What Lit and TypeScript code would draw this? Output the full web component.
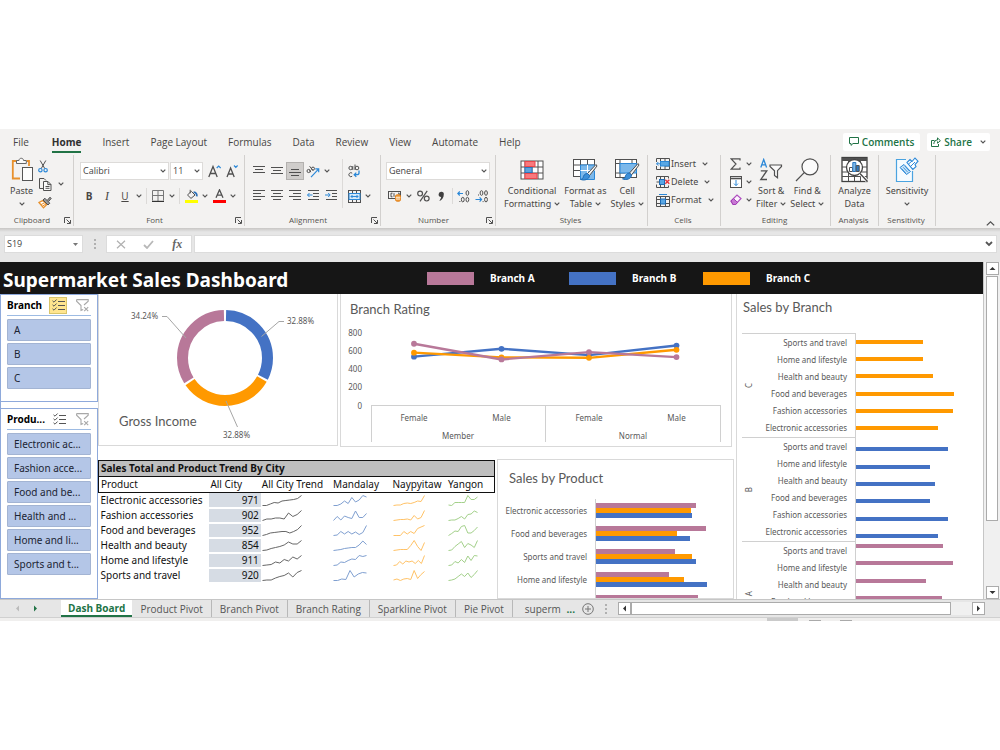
import { LitElement, html, svg, css, nothing } from "lit";
import { customElement, property, state } from "lit/decorators.js";
import { classMap } from "lit/directives/class-map.js";

const BLUE = "#4472c4";
const ORANGE = "#ff9900";
const MAUVE = "#b87899";

const base = css`
  *, *::before, *::after { box-sizing: border-box; }
  button, input, select { font: inherit; color: inherit; margin: 0; padding: 0; border: 0; background: none; border-radius: 0; }
  svg { display: block; flex: none; }
`;

const chev = html`<svg class="chev" width="6" height="4" viewBox="0 0 6 4" fill="none" stroke="#555" stroke-width="1.2"><path d="M0.7 0.7L3 3 5.3 0.7"/></svg>`;

/* stroke icons of the ribbon */
const ic = (w: number, h: number, body: unknown, vb = `0 0 ${w} ${h}`) =>
  html`<svg width=${w} height=${h} viewBox=${vb} fill="none" stroke="#505050" stroke-width="1">${body}</svg>`;

const lines = (rows: [number, number, number][]) =>
  ic(12, 12, svg`${rows.map(([x1, x2, y]) => svg`<path d="M${x1} ${y}H${x2}"/>`)}`);

const I = {
  paste: ic(22, 25, svg`
    <path d="M7 4H1.8v17.5H9M15.5 4H18v5" stroke="#e8912d" stroke-width="1.8"/>
    <path d="M5.5 6.5V3.5H8C8 0.5 12.5 0.5 12.5 3.5h2.8v3z" fill="#fafafa" stroke="#666"/>
    <rect x="11.5" y="10.5" width="10" height="13" fill="#fdfdfd" stroke="#555"/>`),
  cut: ic(10, 13, svg`
    <path d="M2.2 0.5L6.8 8.6M7.8 0.5L3.2 8.6"/>
    <circle cx="2.4" cy="10.2" r="1.7" stroke="#2b88d8" stroke-width="1.2"/><circle cx="7.6" cy="10.2" r="1.7" stroke="#2b88d8" stroke-width="1.2"/>`),
  copy: ic(14, 14, svg`
    <path d="M5 11.5H1.5v-10H6l2 2"/>
    <path d="M5.5 4.5H10l3 3v6H5.5zM9.8 4.6v3H13M7.5 9.5h4M7.5 11.3h4" fill="#fafafa"/>`),
  painter: ic(14, 13, svg`
    <path d="M1 6.5L5.5 11.8 9 8.4 4.6 4.6z" stroke="#e8912d" fill="#fff" stroke-width="1.3"/>
    <path d="M3 8.6l3.6-1.8M4.3 10.2L8 8" stroke="#e8912d"/>
    <path d="M5 4l1.8-1.8 5 5L10 9zM9.3 4.3L12 1.2l1.2 1.2-2.5 3" fill="#999"/>`),
  growA: ic(13, 14, svg`<path d="M0.8 13L5 2.5 9.2 13M2.2 9.5h5.6" stroke-width="1.3"/><path d="M8.7 4L10.7 2l2 2" stroke="#2b88d8" stroke-width="1.2"/>`),
  shrinkA: ic(13, 14, svg`<path d="M1 13L4.6 4 8.2 13M2.3 10h4.6" stroke-width="1.3"/><path d="M8 1.5l1.8 1.8 1.8-1.8" stroke="#2b88d8" stroke-width="1.2"/>`),
  borders: ic(12, 12, svg`<path d="M0.5 0.5h11v10M0.5 0.5v10M6 1v10M1 5.5h10" stroke="#777"/><path d="M0 11.5h12" stroke="#333" stroke-width="1.4"/>`),
  fill: ic(13, 14, svg`
    <path d="M2.5 6L6.3 2.3 10 6 6 9.4zM5.2 0.8v3.5"/>
    <path d="M8.6 3.2c2.6 0 3.4 1.8 3.2 4.2" stroke="#2b6fb8" stroke-width="1.8"/>
    <rect x="0" y="11" width="13" height="3" fill="#ffff00" stroke="none"/>`),
  fontColor: ic(13, 14, svg`<path d="M3 8.8L6.5 0.8 10 8.8M4.2 6.2h4.6" stroke-width="1.3"/><rect x="0" y="11" width="13" height="3" fill="#ff0000" stroke="none"/>`),
  top: lines([[0, 12, 1.5], [2, 10, 4.5], [0, 12, 7.5]]),
  mid: lines([[0, 12, 2.5], [2, 10, 5.5], [0, 12, 8.5]]),
  bot: lines([[2, 10, 4.5], [0, 12, 7.5], [2, 10, 10.5]]),
  left: lines([[0, 12, 0.5], [0, 8, 3.5], [0, 12, 6.5], [0, 8, 9.5]]),
  center: lines([[0, 12, 0.5], [2, 10, 3.5], [0, 12, 6.5], [2, 10, 9.5]]),
  right: lines([[0, 12, 0.5], [4, 12, 3.5], [0, 12, 6.5], [4, 12, 9.5]]),
  outdent: ic(12, 12, svg`<path d="M1 0.5h11M6 3.5h6M6 6.5h6M1 9.5h11"/><path d="M5.5 5H0.5M2.5 3L0.5 5l2 2" stroke="#2b88d8"/>`),
  indent: ic(12, 12, svg`<path d="M1 0.5h11M7 3.5h5M7 6.5h5M1 9.5h11"/><path d="M0 5h5M3.2 3l2 2-2 2" stroke="#2b88d8"/>`),
  orient: ic(14, 13, svg`
    <circle cx="2.6" cy="6" r="1.6"/><path d="M3.6 4.8l1.2 2.4M3.6 1.2l3.4 4.4"/><circle cx="7" cy="3.600" r="1.5"/>
    <path d="M5 12.2L12.5 4.2M9.3 3.8h3.4v3.400" stroke="#2b88d8" stroke-width="1.2"/>`),
  wrap: ic(13, 14, svg`
    <circle cx="2.6" cy="4" r="1.7"/><path d="M4.8 2v4M7 0.5V6"/><circle cx="9" cy="4" r="1.8"/>
    <path d="M4.2 9.2A2 2 0 1 0 4.2 12.2"/>
    <path d="M11 6.5v2.5c0 1.2-1 1.7-2 1.7H6.5M8.3 8.6L6.2 10.7l2.1 2.1" stroke="#2b88d8" stroke-width="1.3"/>`),
  merge: ic(13, 13, svg`<rect x="0.5" y="0.5" width="12" height="12"/><path d="M4.5 0.5v3M8.5 0.5v3M4.5 9.5v3M8.5 9.5v3"/><rect x="1" y="3.5" width="11" height="6" fill="#d5e9f9" stroke="#2b88d8"/><path d="M3 6.5h7M4.5 5L3 6.5 4.5 8M8.5 5L10 6.5 8.5 8" stroke="#2b88d8"/>`),
  money: ic(14, 12, svg`
    <rect x="0.5" y="1.5" width="12" height="7"/><path d="M4.5 3.2H3v3.6h1.5M6 3.2v3.6M10 3.2h1.2v3.6"/>
    <path d="M7.5 5.8c0-1.3 5-1.3 5 0v4.4c0 1.3-5 1.3-5 0z" fill="#f0a040" stroke="#e07b10"/><path d="M7.6 7.3h4.8M7.6 9h4.8" stroke="#fff" stroke-width=".8"/>`),
  percent: ic(13, 12, svg`<circle cx="3.1" cy="3.6" r="2.4" stroke-width="1.2"/><circle cx="9.7" cy="8.6" r="2.4" stroke-width="1.2"/><path d="M10.2 0.8L3 11.4" stroke-width="1.2"/>`),
  comma: ic(7, 11, svg`<path d="M3.3 0.8a2.5 2.5 0 0 1 2.5 2.8C5.8 6.8 4 9.2 1.6 10 1.2 9.4 2.9 8 3.1 6A2.6 2.6 0 1 1 3.3 0.8z" fill="#404040" stroke="none"/>`),
  incDec: ic(14, 13, svg`
    <path d="M6 3.5H0.8M2.8 1.5l-2 2 2 2" stroke="#2b88d8" stroke-width="1.2"/>
    <ellipse cx="10.4" cy="3" rx="1.4" ry="2.3"/><ellipse cx="5.8" cy="9.6" rx="1.4" ry="2.3"/><ellipse cx="10.4" cy="9.6" rx="1.4" ry="2.3"/><path d="M2.4 11.5h1"/>`),
  decDec: ic(14, 13, svg`
    <path d="M0.5 9.5h6M4.6 7.4l2 2.1-2 2.1" stroke="#2b88d8" stroke-width="1.2"/>
    <ellipse cx="6.5" cy="3" rx="1.4" ry="2.3"/><ellipse cx="11" cy="3" rx="1.4" ry="2.3"/><ellipse cx="11" cy="9.6" rx="1.4" ry="2.3"/><path d="M3 5h1M7.6 11.6h1"/>`),
  cond: ic(24, 20, svg`
    <rect x="1" y="1" width="22" height="18" fill="#fff"/>
    <path d="M5 1v18M12 1v18M18 1v18M1 7h22M1 13h22"/>
    <rect x="5" y="1.5" width="10" height="5" fill="#f8797d" stroke="#e8474c"/>
    <rect x="5" y="7.5" width="7" height="5" fill="#5ea3dc" stroke="#2b78c0"/>
    <rect x="5" y="13.5" width="12" height="5" fill="#f8797d" stroke="#e8474c"/>`),
  table: ic(26, 23, svg`
    <rect x="1.5" y="1.5" width="21" height="17" fill="#fff"/>
    <path d="M8.5 1.5v17M15.5 1.5v17M1.5 7h21M1.5 12.5h21"/>
    <path d="M8.5 7h14v14.5h-14z" fill="#7cb8ea" stroke="#2b88d8"/>
    <path d="M15.5 7v12M8.5 12.5h14" stroke="#fff"/>
    <path d="M24 6.5L15.5 15.5l2 2L25 8z" fill="#f3f2f1"/>
    <path d="M15.5 15.5c-3 0-4 2-4.5 4.5-.5 1-2 1.3-2.5 1.3 3.5 1.7 9 .2 9-3.8z" fill="#3c8fd8" stroke="#1f6cb5"/>`),
  cell: ic(26, 23, svg`
    <rect x="1.5" y="1.5" width="21" height="18" fill="#fff"/>
    <path d="M6 1.5v18M1.5 5.5h21M18 1.5v4M1.5 15h10"/>
    <rect x="6" y="5.5" width="16.5" height="9.5" fill="#7cb8ea" stroke="#2b88d8"/>
    <path d="M24 5.5L15.5 15l2 2L25 7z" fill="#f3f2f1"/>
    <path d="M15.5 15c-3 0-4 2-4.5 4.5-.5 1-2 1.3-2.5 1.3 3.5 1.7 9 .2 9-3.8z" fill="#3c8fd8" stroke="#1f6cb5"/>`),
  insert: ic(14, 12, svg`<path d="M0.5 4V0.5h13v11H0.5V8M4.5 0.5v3M9 0.5v11M4.5 8.5v3M9 3.8h4.5M9 8h4.5"/><rect x="4.5" y="3.5" width="8.5" height="4.5" fill="#5aa7e4" stroke="#2b88d8"/><path d="M4.5 5.8H0.6M2.3 4L0.6 5.8l1.7 1.8" stroke="#2b88d8"/>`),
  del: ic(14, 12, svg`<path d="M0.5 3.5V0.5h12v2M4.5 0.5v3M8.5 0.5v3M0.5 8.5v3h12v-2M4.5 8.5v3M8.5 8.5v3"/><path d="M0.5 6h3" /><rect x="3.5" y="3.5" width="5" height="5" fill="#5aa7e4" stroke="#1f6cb5"/><path d="M9.3 3.8l4 4M13.3 3.8l-4 4" stroke="#e8343a" stroke-width="1.4"/>`),
  format: ic(14, 13, svg`<path d="M0.5 2.5h13v10H0.5zM4.5 2.5v10M9.5 2.5v10M0.5 5.5h13M0.5 9.5h13"/><rect x="4.5" y="5" width="5" height="5" fill="#5aa7e4" stroke="#1f6cb5"/><path d="M3 0.5h8" stroke="#2b88d8"/>`),
  sigma: ic(11, 12, svg`<path d="M10 2.5V0.8H1.2L6 6 1.2 11.2H10V9.5" stroke-width="1.2"/>`),
  fillDown: ic(12, 12, svg`<rect x="0.5" y="0.5" width="11" height="11" fill="#fff"/><path d="M0.5 2.5h11" stroke-width="1.6"/><path d="M6 4v5.5M4 7.6l2 2 2-2" stroke="#2b88d8"/>`),
  eraser: ic(12, 12, svg`<path d="M1 7L7 1l4 3.5L5.5 10.5H3z" stroke="#b04fc0" fill="#fdf4fe" stroke-width="1.2"/><path d="M1 7l2.4-2.4 4.2 3.8-2.1 2.1H3z" fill="#c878d4" stroke="#a03cb4"/>`),
  sort: ic(24, 24, svg`
    <path d="M1.8 9.5L4.7 1.5 7.6 9.5M2.8 6.8h3.8" stroke="#2b88d8" stroke-width="1.3"/>
    <path d="M1.8 12.8h6L1.8 21.5h6.2" stroke-width="1.3"/>
    <path d="M11 7h11.5v1.5l-4 4.2v7l-3-2.2v-4.8l-4.5-4.2z" fill="#fafafa" stroke-width="1.2"/>`),
  find: ic(24, 24, svg`<circle cx="15" cy="8.8" r="8" fill="#fbfbfb" stroke-width="1.2"/><path d="M9.2 14.6L1 23" stroke-width="1.2"/>`),
  analyze: ic(27, 27, svg`
    <rect x="1" y="1.5" width="25" height="24" fill="#fff" stroke="#404040" stroke-width="1.3"/>
    <path d="M1 3.5h25" stroke="#505050" stroke-width="3"/><path d="M1 11h25M1 16h25M1 20.5h25M7.5 4v21M19.5 4v21M13.5 18v7"/>
    <circle cx="13.500" cy="11.500" r="8" fill="#fff" stroke="#444" stroke-width="1.3"/>
    <path d="M19 17.5l7 7.5" stroke="#fff" stroke-width="3"/><path d="M19 17.5l7 7.5" stroke="#444" stroke-width="1.3"/>
    <path d="M8.5 15.5v-4h3v4z" fill="#fff"/><path d="M11.8 15.5V6.5h3v9z" fill="#7cb8ea" stroke="#2b78c0"/><path d="M15.2 15.5V9.5h3v6z" fill="#2b78c0"/>`),
  sens: ic(24, 25, svg`
    <path d="M11 2.5H1.5v22h16V14" stroke="#4aa3e0" fill="#f6fbff" stroke-width="1.2"/>
    <path d="M5 10.5l4-3 6.5 7-4 3z" fill="#cfe7f8" stroke="#2b88d8"/>
    <path d="M6.5 11.5l4.5 5M8.2 10.3l4.6 5M9.8 9l4.5 5" stroke="#2b88d8" stroke-width=".9"/>
    <path d="M12 5.5l3-3 2 2L20 1l3 3.2-3 3.4 1 2-3.2 2.8z" fill="#fff" stroke="#2b88d8" stroke-width="1.1"/>
    <path d="M13.5 7l3.5-3M15.5 9.5L20 5" stroke="#2b88d8"/>`),
  comment: html`<svg width="10" height="9" viewBox="0 0 10 9" fill="none" stroke="#217346"><path d="M0.5 0.5h9v6H4L2 8.4V6.5H0.5z"/></svg>`,
  share: html`<svg width="10" height="10" viewBox="0 0 10 10" fill="none" stroke="#217346"><path d="M3.5 3.5h-3v6h7V7"/><path d="M2.8 7C3 4.2 4.6 3 6.5 3V0.9L9.4 3.7 6.5 6.2V4.4"/></svg>`,
  launcher: ic(7, 7, svg`<path d="M0.5 6V0.5H6" /><path d="M2.5 2.5l3.6 3.6M6.5 3v3.5H3"/>`),
};

@customElement("ribbon-bar")
class RibbonBar extends LitElement {
  static styles = [base, css`
    :host { display: block; background: #f3f2f1; color: #484644; font-family: "Open Sans", "Noto Sans", sans-serif; }
    .tabs { display: flex; align-items: center; padding: 0 10px 1px 13px; height: 26px; font-size: 10px; }
    nav { display: flex; gap: 21px; flex: 1; }
    nav a { color: inherit; text-decoration: none; line-height: 18px; border-bottom: 2px solid transparent; margin-top: 2px; white-space: nowrap; }
    nav a:first-child { padding-right: 2px; }
    nav a.on { font-weight: 700; color: #303030; border-color: #217346; }
    .top { display: flex; gap: 7px; }
    .top button { height: 18px; background: #fff; color: #217346; font-weight: 600; display: flex; align-items: center; gap: 3px; padding: 0 6px; border-radius: 2px; }
    .top button + button { padding: 0 4px; }
    .top .chev { margin-left: 5px; }
    .groups { display: grid; grid-template-columns: 74fr 171fr 136fr 115fr 152fr 73fr 110fr 48fr 57fr 64fr; padding-bottom: 2px; }
    .g { border-right: 1px solid #d2d0ce; height: 71px; display: flex; flex-direction: column; min-width: 0; overflow: hidden; }
    .g:last-child { border: 0; }
    .body { flex: 1; display: flex; min-height: 0; }
    .foot { height: 12px; display: flex; align-items: center; font-size: 8px; line-height: 12px; color: #55534f; padding-right: 2px; }
    .foot span { flex: 1; text-align: center; }
    button { display: flex; align-items: center; justify-content: center; }
    .big { flex-direction: column; justify-content: flex-start; font: 9px/13px "Noto Sans", sans-serif; white-space: nowrap; }
    .big .i { height: 29px; display: flex; align-items: center; }
    .big .t { display: flex; align-items: center; gap: 3px; min-height: 13px; }
    .col { display: flex; flex-direction: column; }
    .row { display: flex; align-items: center; }
    .clip { padding-left: 10px; gap: 5px; }
    .clip .side { padding-top: 2px; }
    .clip .side button { height: 18px; gap: 6px; justify-content: flex-start; }
    .font { padding: 7px 0 0 6px; gap: 7px; }
    .font, .num, .al { flex-direction: column; }
    .box { display: grid; align-items: center; background: #fff; border: 1px solid #dddbd9; height: 18px; }
    .box > * { grid-area: 1 / 1; }
    .box select { appearance: none; width: 100%; height: 16px; line-height: 16px; font-size: 9px; padding-left: 2px; outline: none; color: #444; }
    .box svg { justify-self: end; margin-right: 2px; pointer-events: none; }
    .name { width: 89px; } .size { width: 33px; margin: 0 2px 0 1px; } .fmt { width: 104px; }
    .s { width: 18px; height: 18px; }
    .c { width: 15px; height: 18px; }
    .fc { width: 10px; }
    .b { font-size: 10px; font-weight: 700; } .it { font: italic 12px "Liberation Serif", serif; } .u { font-size: 10px; text-decoration: underline; }
    .v { width: 1px; height: 16px; background: #dcdad8; }
    .v.gap { margin: 0 2px; }
    .al { padding: 7px 0 0 5px; gap: 7px; flex: none; width: 97px; }
    .al .on { background: #cfcdcb; border: 1px solid #b3b1af; }
    .al2 { border-left: 1px solid #dcdad8; margin: 4px 0 6px; padding: 3px 0 0 2px; gap: 7px; flex-direction: column; display: flex; flex: 1; }
    .num { padding: 7px 0 0 5px; gap: 7px; }
    .st { padding-left: 8px; gap: 4px; }
    .cells { padding: 0 0 0 8px; gap: 0; flex-direction: column; font: 9px/18px "Noto Sans", sans-serif; }
    .cells button { height: 18px; gap: 1px; justify-content: flex-start; }
    .cells .chev { margin-left: 5px; }
    .ed { padding-left: 9px; gap: 4px; }
    .ed .side button { height: 18px; width: 22px; justify-content: space-between; }
    .mid { justify-content: center; }
    .end { align-items: flex-end; justify-content: flex-end; padding: 0 5px 0; }
    .shadow { height: 4px; background: linear-gradient(#c8c6c4, #e6e6e6); }
  `];
  private group(label: string, body: unknown, launch = true) {
    return html`<section class="g" aria-label=${label}>${body}
      <div class="foot"><span>${label}</span>${launch ? html`<button aria-label="${label} settings">${I.launcher}</button>` : nothing}</div></section>`;
  }
  private big(icon: unknown, a: string, b: string, arrow = true) {
    return html`<button class="big"><span class="i">${icon}</span><span class="t">${a}</span><span class="t">${b}${arrow ? chev : nothing}</span></button>`;
  }
  private b(icon: unknown, label: string, cls = "s") {
    return html`<button class=${cls} aria-label=${label}>${icon}</button>`;
  }
  render() {
    const tabs = ["File", "Home", "Insert", "Page Layout", "Formulas", "Data", "Review", "View", "Automate", "Help"];
    return html`
      <div class="tabs">
        <nav>${tabs.map(t => html`<a href="#" class=${classMap({ on: t === "Home" })}>${t}</a>`)}</nav>
        <div class="top"><button>${I.comment}Comments</button><button>${I.share}Share${chev}</button></div>
      </div>
      <div class="groups">
        ${this.group("Clipboard", html`<div class="body clip">
          ${this.big(I.paste, "Paste", "")}
          <div class="col side">
            ${this.b(I.cut, "Cut", "")}
            <button aria-label="Copy">${I.copy}${chev}</button>
            ${this.b(I.painter, "Format Painter", "")}
          </div></div>`)}
        ${this.group("Font", html`<div class="body font">
          <div class="row">
            <label class="box name"><select aria-label="Font name"><option>Calibri</option></select>${chev}</label>
            <label class="box size"><select aria-label="Font size"><option>11</option></select>${chev}</label>
            ${this.b(I.growA, "Increase font size")}${this.b(I.shrinkA, "Decrease font size")}
          </div>
          <div class="row">
            <button class="s b">B</button><button class="s it">I</button><button class="s u">U</button>
            ${this.b(chev, "Underline options", "fc")}<span class="v gap"></span>
            ${this.b(I.borders, "Borders")}${this.b(chev, "Border options", "fc")}<span class="v gap"></span>
            ${this.b(I.fill, "Fill colour")}${this.b(chev, "Fill options", "fc")}
            ${this.b(I.fontColor, "Font colour")}${this.b(chev, "Font colour options", "fc")}
          </div></div>`)}
        ${this.group("Alignment", html`<div class="body">
          <div class="body al">
            <div class="row">${this.b(I.top, "Top align")}${this.b(I.mid, "Middle align")}${this.b(I.bot, "Bottom align", "s on")}${this.b(I.orient, "Orientation")}${this.b(chev, "Orientation options", "fc")}</div>
            <div class="row">${this.b(I.left, "Align left")}${this.b(I.center, "Center")}${this.b(I.right, "Align right")}${this.b(I.outdent, "Decrease indent")}${this.b(I.indent, "Increase indent")}</div>
          </div>
          <div class="al2">
            <div class="row">${this.b(I.wrap, "Wrap text")}</div>
            <div class="row">${this.b(I.merge, "Merge and center")}${this.b(chev, "Merge options", "fc")}</div>
          </div></div>`)}
        ${this.group("Number", html`<div class="body num">
          <label class="box fmt"><select aria-label="Number format"><option>General</option></select>${chev}</label>
          <div class="row">${this.b(I.money, "Accounting format")}${this.b(chev, "Accounting options", "fc")}
            ${this.b(I.percent, "Percent")}${this.b(I.comma, "Comma style")}<span class="v gap"></span>
            ${this.b(I.incDec, "Increase decimal")}${this.b(I.decDec, "Decrease decimal")}</div></div>`)}
        ${this.group("Styles", html`<div class="body st">
          ${this.big(I.cond, "Conditional", "Formatting")}${this.big(I.table, "Format as", "Table")}${this.big(I.cell, "Cell", "Styles")}</div>`, false)}
        ${this.group("Cells", html`<div class="body cells">
          <button>${I.insert}Insert${chev}</button><button>${I.del}Delete${chev}</button><button>${I.format}Format${chev}</button></div>`, false)}
        ${this.group("Editing", html`<div class="body ed">
          <div class="col side"><button aria-label="AutoSum">${I.sigma}${chev}</button><button aria-label="Fill">${I.fillDown}${chev}</button><button aria-label="Clear">${I.eraser}${chev}</button></div>
          ${this.big(I.sort, "Sort &", "Filter")}${this.big(I.find, "Find &", "Select")}</div>`, false)}
        ${this.group("Analysis", html`<div class="body mid">${this.big(I.analyze, "Analyze", "Data", false)}</div>`, false)}
        ${this.group("Sensitivity", html`<div class="body mid">${this.big(I.sens, "Sensitivity", "")}</div>`, false)}
        <section class="g"><div class="body end"><button aria-label="Collapse ribbon">${ic(9, 5, svg`<path d="M0.8 4.4L4.5 0.9 8.2 4.4" stroke-width="1.3"/>`)}</button></div></section>
      </div>
      <div class="shadow"></div>`;
  }
}

@customElement("formula-bar")
class FormulaBar extends LitElement {
  static styles = [base, css`
    :host { display: flex; align-items: center; gap: 2px; background: #e6e6e6; padding: 3px 3px 9px 4px; font: 9px/18px "Open Sans", sans-serif; color: #444; }
    .box { display: flex; align-items: center; background: #fff; height: 18px; border: 1px solid #dcdcdc; }
    .name { width: 79px; padding-right: 4px; }
    .name input { flex: 1; min-width: 0; padding-left: 2px; outline: none; }
    .dots { width: 19px; display: flex; justify-content: center; }
    .acts { width: 86px; justify-content: space-around; }
    .fx { font: italic 700 12px/16px "Liberation Serif", serif; color: #666; }
    .f { flex: 1; padding-right: 3px; }
    .f input { flex: 1; outline: none; }
  `];
  render() {
    return html`
      <div class="box name"><input aria-label="Name box" value="S19"><svg width="5" height="3"><path d="M0 0h5L2.5 3z" fill="#777"/></svg></div>
      <span class="dots"><svg width="2" height="10" fill="#b0b0b0"><path d="M0 0h2v2H0zM0 4h2v2H0zM0 8h2v2H0z"/></svg></span>
      <div class="box acts">
        <button aria-label="Cancel"><svg width="10" height="9" stroke="#b0b0b0" stroke-width="1.2" fill="none"><path d="M1 0.8l8 7.5M9 0.8L1 8.3"/></svg></button>
        <button aria-label="Enter"><svg width="11" height="9" stroke="#b8b8b8" stroke-width="1.8" fill="none"><path d="M1 5l3 3L10 1"/></svg></button>
        <button class="fx" aria-label="Insert function">fx</button>
      </div>
      <div class="box f"><input aria-label="Formula"><svg width="8" height="6" fill="none" stroke="#555" stroke-width="1.8"><path d="M1 1l3 3 3-3"/></svg></div>`;
  }
}

@customElement("data-slicer")
class DataSlicer extends LitElement {
  @property() heading = "";
  @property({ type: Array }) items: string[] = [];
  @property({ type: Boolean }) multi = false;
  static styles = [base, css`
    :host { display: block; border: 1px solid #8ea9db; border-left: 0; background: #fff; padding: 0 6px; font: 10px/20px "Noto Sans", sans-serif; color: #1b2433; overflow: hidden; }
    header { display: flex; align-items: center; height: 21px; border-bottom: 1px solid #9dbbe3; margin-bottom: 3px; font-weight: 700; color: #000; }
    header span { flex: 1; }
    header button { width: 18px; height: 17px; display: flex; align-items: center; justify-content: center; margin-left: 6px; }
    header .on { background: #ffe58f; border: 1px solid #d9c56a; }
    .item { display: block; width: 100%; height: 22px; margin-bottom: 2px; text-align: left; padding-left: 6px; background: #b4c6e7; border: 1px solid #a3b4d3; border-radius: 1px; white-space: nowrap; overflow: hidden; }
  `];
  render() {
    return html`
      <header><span>${this.heading}</span>
        <button class=${classMap({ on: this.multi })} aria-label="Multi-select"><svg width="13" height="12" fill="none" stroke="#555" stroke-width="1"><path d="M0.5 1.8L2 3.2 4.6 0.5M0.5 5.8L2 7.2 4.6 4.5M0.5 9.8L2 11.2 4.6 8.5M6 2.5h7M6 6.5h7M6 10.5h7"/></svg></button>
        <button aria-label="Clear filter"><svg width="13" height="13" fill="none" stroke="#a8a8a8" stroke-width="1.1"><path d="M0.6 0.6h11.6v1.6L8 6M0.6 0.6v1.6L5 6.5v5l2.2-1"/><path d="M8.2 8.2l4 4M12.2 8.2l-4 4"/></svg></button>
      </header>
      ${this.items.map(i => html`<button class="item">${i}</button>`)}`;
  }
}

@customElement("income-chart")
class IncomeChart extends LitElement {
  static styles = [base, css`
    :host { display: block; border: 1px solid #d9d9d9; border-top: 0; background: #fff; }
    svg { width: 100%; height: auto; }
    .n { font: 8px "Noto Sans", sans-serif; fill: #595959; }
    .h { font: 13px Lato, sans-serif; fill: #595959; }
  `];
  render() {
    const parts: [number, number, string][] = [[0, 32.88, BLUE], [32.88, 32.88, ORANGE], [65.76, 34.24, MAUVE]];
    return html`<svg viewBox="99 294 238 151" role="img" aria-label="Gross Income">
      <g fill="none" stroke-width="11" transform="rotate(-90 225 358)">
        ${parts.map(([o, l, c]) => svg`<circle cx="225" cy="358" r="42.5" pathLength="100" stroke=${c} stroke-dasharray="${l - 0.8} ${100.8 - l}" stroke-dashoffset=${-o - 0.4}></circle>`)}
      </g>
      <path d="M162 316.500h5L186 338M284 321.500h-5L261.500 336.500M226 401L237.500 427" fill="none" stroke="#a6a6a6"/>
      <text class="n" x="131" y="319">34.24%</text><text class="n" x="287" y="324">32.88%</text><text class="n" x="223" y="438">32.88%</text>
      <text class="h" x="119" y="426">Gross Income</text></svg>`;
  }
}

@customElement("rating-chart")
class RatingChart extends LitElement {
  static styles = [base, css`
    :host { display: block; border: 1px solid #d9d9d9; border-top: 0; background: #fff; }
    svg { width: 100%; height: auto; }
    .n { font: 8px "Noto Sans", sans-serif; fill: #595959; }
    .m { text-anchor: middle; } .e { text-anchor: end; }
    .h { font: 13px Lato, sans-serif; fill: #595959; }
  `];
  render() {
    const xs = [414, 501.5, 589, 676.5];
    const series: [string, number[]][] = [
      [BLUE, [541, 628, 558, 664]], [ORANGE, [585, 533, 528, 617]], [MAUVE, [684, 510, 591, 536]]];
    const y = (v: number) => 405.5 - v * 0.0903;
    return html`<svg viewBox="341 294 390 152" role="img" aria-label="Branch Rating">
      <text class="h" x="350" y="314">Branch Rating</text>
      ${[800, 600, 400, 200, 0].map(v => svg`<text class="n e" x="362" y=${y(v) + 3}>${v}</text>`)}
      <path d="M371 405.500H720.500M371.500 405v37M545.500 405v37M720.500 405v37" stroke="#d0d0d0" fill="none"/>
      ${series.map(([c, vs]) => svg`<polyline fill="none" stroke=${c} stroke-width="2.4" stroke-linejoin="round" points=${vs.map((v, i) => `${xs[i]},${y(v)}`).join(" ")}></polyline>
        ${vs.map((v, i) => svg`<circle cx=${xs[i]} cy=${y(v)} r="2.9" fill=${c}></circle>`)}`)}
      ${["Female", "Male", "Female", "Male"].map((t, i) => svg`<text class="n m" x=${xs[i]} y="421">${t}</text>`)}
      <text class="n m" x="458" y="439">Member</text><text class="n m" x="633" y="439">Normal</text></svg>`;
  }
}

const TREND: [string, number, number[][]][] = [
  ["Electronic accessories", 971, [[0, 0, 1.5, 3, 2.5, 4.5, 5, 5.5, 6, 7, 10], [0, 0, 1.5, 4.5, 2, 8, 3.5, 5.5, 10, 8.5], [0, .5, .5, 2, 2.5, 2, 3, 4.5, 4, 10], [.5, 0, 3, 3, 3, 3, 10, 6, 6, 8.5]]],
  ["Fashion accessories", 902, [[0, 1.5, 1.5, 2.5, 2.5, 1.5, 7.5, 4, 6, 10], [0, 4, .5, 4.5, 3, 2, 9.5, 3, 3, 7], [0, .5, 1, 1, 1.5, .5, 5, 1.5, 3, 10], [0, .5, .5, 2, 4, 1.5, 6, 6.5, 9.5, 8]]],
  ["Food and beverages", 952, [[0, 1, 2.5, 3, 3.5, 4, 4, 2.5, 4, 6, 10], [0, .5, 4, 1.5, 4, 1.5, 3.5, 1, 3, 10], [0, 0, 0, 4, 1.5, 4, 2, 7, 8.5, 10], [0, 2, 4.5, 4, 9, 10, 2.5, 2.5, 5, 8.5]]],
  ["Health and beauty", 854, [[0, .5, 2, 3, 4, 5.5, 8.5, 6.5, 6.5, 10], [0, .5, 1, 2, 2.5, 3, 3, 5.5, 9.5, 6], [0, .5, 1, 1, 1, 5, 10, 4, 0, 8], [0, .5, 4, 6.5, 9, 3, 7, 5.5, 3, 10]]],
  ["Home and lifestyle", 911, [[0, .5, 1, 3.5, 2.5, 6, 4.5, 8.5, 6.5, 10], [0, .5, 3.5, 3, 5, 6.5, 6, 10, 9, 10], [0, .5, 4, 1.5, 4.5, 3.5, 4.5, 2, 5, 2, 10], [0, .5, 4, 2.5, 6, 3, 9.5, 5, 10, 9.5]]],
  ["Sports and travel", 920, [[0, .5, .5, 2.5, 4, 5, 7.5, 3.5, 8, 10], [0, 0, 1.5, 1, 10, 3.5, 6.5, 8, 7.5], [.5, 1.5, 0, 1.5, 2, 1, 10, 2, 6, 9], [0, .5, 1.5, 4, 6.5, 4, 7.5, 3, 6, 10]]],
];

@customElement("trend-table")
class TrendTable extends LitElement {
  static styles = [base, css`
    :host { display: block; font: 10px/15px "Noto Sans", sans-serif; color: #111; }
    table { width: 100%; table-layout: fixed; border-collapse: collapse; background: #fff; }
    th, td { padding: 0 0 0 2px; height: 15px; text-align: left; font-weight: 400; white-space: nowrap; }
    .cap th { font-weight: 700; background: #bfbfbf; }
    .cap th, .heads { border: 1px solid #111; }
    .cap th { height: 16px; }
    .heads th:nth-child(n+2) { padding-left: 1px; }
    td:nth-child(n+3) { padding-left: 1px; }
    td.num { text-align: right; padding-right: 2px; background: #d6dce4; border-bottom: 2px solid #fff; line-height: 13px; }
    .w1 { width: 28%; } .w2 { width: 13%; } .w3 { width: 18%; } .w4 { width: 15%; } .w5 { width: 14%; }
  `];
  private spark(v: number[], w: number, c: string) {
    return html`<svg width=${w} height="11" fill="none" stroke=${c}><polyline points=${v.map((n, i) => `${(i * (w - 1)) / (v.length - 1) + 0.5},${10.5 - n}`).join(" ")}></polyline></svg>`;
  }
  render() {
    const widths = [40, 34, 32, 30];
    const colors = ["#666", "#7f9fd0", "#ffc266", "#a3d08a"];
    return html`<table>
      <colgroup><col class="w1"><col class="w2"><col class="w3"><col class="w4"><col class="w5"><col></colgroup>
      <thead>
        <tr class="cap"><th colspan="6">Sales Total and Product Trend By City</th></tr>
        <tr class="heads">${["Product", "All City", "All City Trend", "Mandalay", "Naypyitaw", "Yangon"].map(t => html`<th scope="col">${t}</th>`)}</tr>
      </thead>
      <tbody>${TREND.map(([name, n, s]) => html`<tr><td>${name}</td><td class="num">${n}</td>${s.map((v, i) => html`<td>${this.spark(v, widths[i], colors[i])}</td>`)}</tr>`)}</tbody>
    </table>`;
  }
}

@customElement("product-chart")
class ProductChart extends LitElement {
  static styles = [base, css`
    :host { display: block; border: 1px solid #d9d9d9; background: #fff; font: 8px/10px "Noto Sans", sans-serif; color: #595959; overflow: hidden; }
    h2 { font: 13px/16px Lato, sans-serif; margin: 10px 0 13px 11px; }
    .row { display: grid; grid-template-columns: 89fr 146fr; height: 23px; align-items: center; }
    .row span { text-align: right; white-space: nowrap; }
    .bars { border-left: 1px solid #d0d0d0; margin-left: 8px; height: 100%; display: flex; flex-direction: column; justify-content: center; }
    .bars i { display: block; height: 5px; }
    .a { background: #b87899; } .c { background: #ff9900; } .b { background: #4472c4; }
  `];
  render() {
    const data: [string, number, number, number][] = [
      ["Electronic accessories", 100, 95, 96], ["Food and beverages", 110, 81, 94], ["Sports and travel", 79, 96, 100], ["Home and lifestyle", 73, 88, 111], ["Fashion accessories", 102, 90, 95]];
    const w = (v: number) => `width:${(v / 137) * 100}%`;
    return html`<h2>Sales by Product</h2>
      ${data.map(([n, a, c, b]) => html`<div class="row"><span>${n}</span><div class="bars"><i class="a" style=${w(a)}></i><i class="c" style=${w(c)}></i><i class="b" style=${w(b)}></i></div></div>`)}`;
  }
}

@customElement("branch-chart")
class BranchChart extends LitElement {
  static styles = [base, css`
    :host { display: block; border-left: 1px solid #d9d9d9; background: #fff; font: 8px/10px "Noto Sans", sans-serif; color: #595959; overflow: hidden; }
    h2 { font: 13px/16px Lato, sans-serif; margin: 5px 0 18px 6px; }
    .g { display: grid; grid-template-columns: 119fr 127fr; height: 104px; }
    .l { display: grid; grid-template-columns: 14px 1fr; border-top: 1px solid #d0d0d0; border-right: 1px solid #d0d0d0; margin-left: 5px; padding-right: 8px; }
    .k { writing-mode: vertical-rl; transform: rotate(180deg); align-self: center; justify-self: center; }
    .names, .plot { display: grid; grid-template-rows: repeat(6, 1fr); min-height: 0; }
    .names span { text-align: right; align-self: center; white-space: nowrap; }
    .slot { display: flex; align-items: center; min-height: 0; }
    .slot i { height: 4px; }
    .A .slot { align-items: flex-start; padding-top: 3px; } .B .slot { align-items: flex-end; padding-bottom: 3px; }
    .A i { background: #b87899; } .B i { background: #4472c4; } .C i { background: #ff9900; }
  `];
  render() {
    const names = ["Sports and travel", "Home and lifestyle", "Health and beauty", "Food and beverages", "Fashion accessories", "Electronic accessories"];
    const data: Record<string, number[]> = { C: [68, 68, 78, 99, 98, 83], B: [93, 75, 80, 75, 93, 83], A: [88, 98, 71, 87, 80, 92] };
    return html`<h2>Sales by Branch</h2>
      ${["C", "B", "A"].map(k => html`<div class="g ${k}">
        <div class="l"><span class="k">${k}</span><div class="names">${names.map(n => html`<span>${n}</span>`)}</div></div>
        <div class="plot">${data[k].map(v => html`<div class="slot"><i style=${`width:${(v / 128) * 100}%`}></i></div>`)}</div></div>`)}`;
  }
}

const arrow = (d: string, c = "#333") => html`<svg width="7" height="7" viewBox="0 0 7 7"><path d=${d} fill=${c}/></svg>`;

@customElement("app-root")
class AppRoot extends LitElement {
  @state() private sheet = "Dash Board";
  static styles = [base, css`
    :host { display: block; box-sizing: border-box; background: #fff; min-height: 100vh; padding-top: 129px; }
    .work { display: grid; grid-template-columns: 1fr 16px; height: 337px; background: #f0f0f0; }
    .sheet { background: #fff; display: grid; grid-template-rows: 32px 1fr; overflow: hidden; border-right: 1px solid #c6c6c6; }
    .band { background: #161616; color: #fff; display: grid; grid-template-columns: 427fr 142fr 134fr 280fr; align-items: center; font: 700 10px/14px "Noto Sans", sans-serif; }
    h1 { font: 700 19px/26px "Noto Sans", sans-serif; margin: 3px 0 0 3px; white-space: nowrap; }
    .key { display: flex; align-items: center; gap: 16px; white-space: nowrap; }
    .key i { width: 47px; height: 13px; }
    .a { background: #b87899; } .b { background: #4472c4; } .c { background: #ff9900; }
    .grid { display: grid; grid-template-columns: 98fr 638fr 247fr; min-height: 0; }
    .slicers { display: grid; grid-template-rows: 108px 1fr; gap: 6px; min-height: 0; border-left: 1px solid #8ea9db; }
    .mid { display: grid; grid-template-rows: 153px 1fr; gap: 12px; padding-right: 2px; min-height: 0; }
    .up { display: grid; grid-template-columns: 240fr 392fr; gap: 2px; align-items: start; padding-right: 2px; }
    .low { display: grid; grid-template-columns: 399fr 237fr; min-height: 0; }
    trend-table { padding-top: 1px; padding-right: 2px; }
    .bar { display: flex; flex-direction: column; padding: 0 2px; }
    button { display: flex; align-items: center; justify-content: center; flex: none; }
    .ab { background: #fff; border: 1px solid #ababab; width: 13px; height: 13px; }
    .thumb { background: #fff; border: 1px solid #ababab; }
    .vt { height: 245px; margin-top: 1px; }
    .sp { flex: 1; }
    .tabs { display: flex; align-items: center; background: #e6e6e6; height: 19px; border-top: 1px solid #c6c6c6; border-bottom: 1px solid #d0d0d0; padding-right: 15px; font: 10px/16px "Open Sans", sans-serif; color: #555; }
    .nv { width: 18px; height: 16px; }
    .first { margin-left: 8px; } .second { margin-right: 17px; }
    .tab { height: 17px; padding: 0 8px; white-space: nowrap; border-right: 1px solid #b8b8b8; }
    .tab.on { background: #fff; color: #217346; font-weight: 700; border: 0; border-bottom: 2px solid #217346; padding: 0 7px; }
    .cut { border: 0; padding: 0 4px 0 12px; }
    .more { color: #217346; font-weight: 700; width: 12px; margin-right: 5px; }
    .dots { width: 24px; display: flex; justify-content: center; }
    .h { flex: 1; display: flex; background: #f0f0f0; min-width: 0; }
    .h .thumb { flex: 328; } .h .sp { flex: 22; }
    .status { background: #f0efee; height: 3px; display: flex; justify-content: flex-end; padding-right: 148px; gap: 11px; align-items: flex-end; }
    .status i { height: 1px; width: 12px; background: #aaa; } .status i:first-child { height: 3px; width: 31px; background: #cacaca; } .status i:last-child { margin-left: 8px; }
  `];
  render() {
    const tabs = ["Dash Board", "Product Pivot", "Branch Pivot", "Branch Rating", "Sparkline Pivot", "Pie Pivot"];
    return html`
      <ribbon-bar></ribbon-bar>
      <formula-bar></formula-bar>
      <div class="work">
        <main class="sheet">
          <div class="band"><h1>Supermarket Sales Dashboard</h1>
            <span class="key"><i class="a"></i>Branch A</span><span class="key"><i class="b"></i>Branch B</span><span class="key"><i class="c"></i>Branch C</span></div>
          <div class="grid">
            <div class="slicers">
              <data-slicer heading="Branch" multi .items=${["A", "B", "C"]}></data-slicer>
              <data-slicer heading="Produ..." .items=${["Electronic ac...", "Fashion acce...", "Food and be...", "Health and ...", "Home and li...", "Sports and t..."]}></data-slicer>
            </div>
            <div class="mid">
              <div class="up"><income-chart></income-chart><rating-chart></rating-chart></div>
              <div class="low"><trend-table></trend-table><product-chart></product-chart></div>
            </div>
            <branch-chart></branch-chart>
          </div>
        </main>
        <div class="bar"><button class="ab" aria-label="Scroll up">${arrow("M0.5 5L3.5 2 6.5 5z")}</button><div class="thumb vt"></div><div class="sp"></div><button class="ab" aria-label="Scroll down">${arrow("M0.5 2L3.5 5 6.5 2z")}</button></div>
      </div>
      <div class="tabs">
        <button class="nv first" aria-label="Previous sheets">${arrow("M5 0.5L2 3.5 5 6.5z", "#bbb")}</button>
        <button class="nv second" aria-label="Next sheets">${arrow("M2 0.5L5 3.5 2 6.5z", "#217346")}</button>
        ${tabs.map(t => html`<button class=${classMap({ tab: true, on: t === this.sheet })} @click=${() => (this.sheet = t)}>${t}</button>`)}
        <button class="tab cut">superm</button><button class="more">...</button>
        <button aria-label="New sheet"><svg width="12" height="12" fill="none" stroke="#777"><circle cx="6" cy="6" r="5.3"/><path d="M3 6h6M6 3v6"/></svg></button>
        <span class="dots"><svg width="2" height="10" fill="#b0b0b0"><path d="M0 0h2v2H0zM0 4h2v2H0zM0 8h2v2H0z"/></svg></span>
        <div class="h"><button class="ab" aria-label="Scroll left">${arrow("M5 0.5L2 3.5 5 6.5z")}</button><div class="thumb"></div><div class="sp"></div><button class="ab" aria-label="Scroll right">${arrow("M2 0.5L5 3.5 2 6.5z")}</button></div>
      </div>
      <div class="status"><i></i><i></i><i></i></div>`;
  }
}
